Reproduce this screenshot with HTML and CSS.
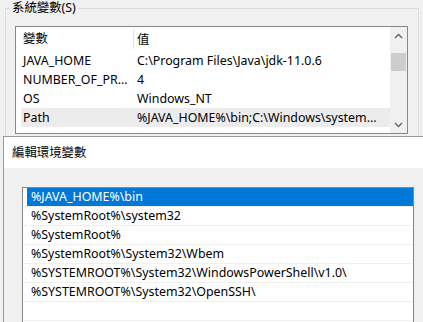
FILE: index.html
```html
<!DOCTYPE html>
<html lang="zh-Hant">
<head>
<meta charset="utf-8">
<title>環境變數</title>
<link rel="stylesheet" href="styles.css">
</head>
<body>
<div class="top">
  <fieldset class="group">
    <legend>系統變數(S)</legend>
    <div class="listview">
      <div class="lv-body">
        <div class="lv-header">
          <div class="h1">變數</div>
          <div class="h2">值</div>
        </div>
        <div class="lv-row"><div class="c1">JAVA_HOME</div><div class="c2">C:\Program Files\Java\jdk-11.0.6</div></div>
        <div class="lv-row"><div class="c1">NUMBER_OF_PR...</div><div class="c2">4</div></div>
        <div class="lv-row"><div class="c1">OS</div><div class="c2">Windows_NT</div></div>
        <div class="lv-row sel"><div class="c1">Path</div><div class="c2">%JAVA_HOME%\bin;C:\Windows\system...</div></div>
      </div>
      <div class="vscroll">
        <div class="arrow">
          <svg width="9" height="6" viewBox="0 0 9 6"><path d="M1 5 L4.5 1.5 L8 5" fill="none" stroke="#606060" stroke-width="1.3"/></svg>
        </div>
        <div class="track"><div class="thumb"></div></div>
        <div class="arrow">
          <svg width="9" height="6" viewBox="0 0 9 6"><path d="M1 1 L4.5 4.5 L8 1" fill="none" stroke="#606060" stroke-width="1.3"/></svg>
        </div>
      </div>
    </div>
  </fieldset>
</div>
<div class="dialog">
  <div class="titlebar">編輯環境變數</div>
  <div class="dlg-body">
    <div class="listbox">
      <div class="lb-row sel"><span>%JAVA_HOME%\bin</span></div>
      <div class="lb-row"><span>%SystemRoot%\system32</span></div>
      <div class="lb-row"><span>%SystemRoot%</span></div>
      <div class="lb-row"><span>%SystemRoot%\System32\Wbem</span></div>
      <div class="lb-row"><span>%SYSTEMROOT%\System32\WindowsPowerShell\v1.0\</span></div>
      <div class="lb-row"><span>%SYSTEMROOT%\System32\OpenSSH\</span></div>
      <div class="lb-row"><span></span></div>
    </div>
  </div>
</div>
</body>
</html>
```
FILE: styles.css
```css
html, body {
  margin: 0;
  padding: 0;
}
body {
  width: 423px;
  height: 322px;
  overflow: hidden;
  background: #f0f0f0;
  color: #000;
  font-family: "Noto Sans", "Noto Sans CJK TC", sans-serif;
  font-size: 12.4px;
}
.top {
  height: 136px;
  overflow: hidden;
}
.group {
  box-sizing: border-box;
  margin: 0 4px 0 5px;
  padding: 10px 10px 0 9px;
  border: 1px solid #dcdcdc;
  min-width: 0;
  height: 140px;
}
.group legend {
  margin-left: -5px;
  padding: 0 2px;
  line-height: 16px;
  font-size: 12.4px;
}
.listview {
  box-sizing: border-box;
  height: 108px;
  border: 1px solid #828790;
  background: #fff;
  display: grid;
  grid-template-columns: 1fr 17px;
}
.lv-body {
  padding-left: 5px;
  overflow: hidden;
}
.lv-header {
  height: 24px;
  display: flex;
  align-items: center;
}
.h1 {
  width: 110px;
  height: 20px;
  line-height: 20px;
  padding-left: 2px;
  border-right: 1px solid #e5e5e5;
}
.h2 {
  padding-left: 3px;
}
.lv-row {
  height: 19px;
  line-height: 19px;
  display: flex;
  white-space: nowrap;
}
.lv-row.sel {
  background: #ececec;
}
.c1 {
  width: 112px;
  padding-left: 2px;
}
.c2 {
  padding-left: 2px;
}
.vscroll {
  background: #f0f0f0;
  display: flex;
  flex-direction: column;
}
.arrow {
  height: 17px;
  display: flex;
  align-items: center;
  justify-content: center;
}
.track {
  flex: 1;
  padding: 9px 1px 0 1px;
}
.thumb {
  height: 18px;
  background: #cdcdcd;
}
.dialog {
  box-sizing: border-box;
  margin-left: 3px;
  height: 186px;
  overflow: hidden;
  border-top: 1px solid #9b9b9b;
  border-left: 1px solid #9b9b9b;
}
.titlebar {
  background: #fff;
  height: 31px;
  line-height: 31px;
  padding-left: 8px;
}
.dlg-body {
  padding: 19px 9px 0 18px;
}
.listbox {
  box-sizing: border-box;
  background: #fff;
  border: 1px solid #828790;
  border-bottom: none;
  height: 135px;
  overflow: hidden;
}
.lb-row {
  box-sizing: border-box;
  height: 19px;
  border-bottom: 1px solid #f0f0f0;
  display: flex;
  white-space: nowrap;
}
.lb-row span {
  flex: 1;
  margin-left: 4px;
  padding-left: 4px;
  line-height: 18px;
}
.lb-row.sel span {
  background: #0078d7;
  color: #fff;
}
```
